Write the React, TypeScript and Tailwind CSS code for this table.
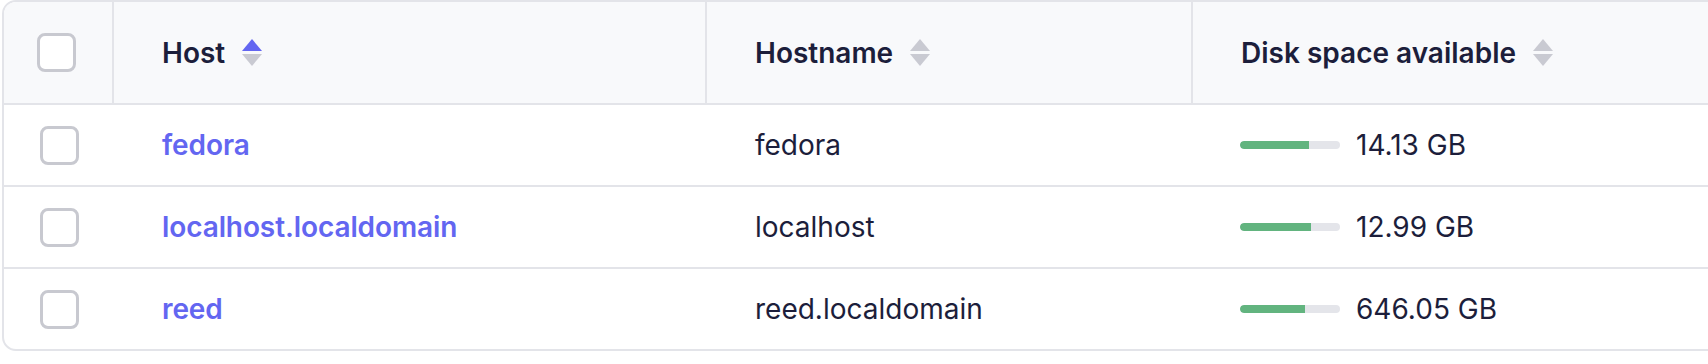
import React from "react";

type HostRow = {
  host: string;
  hostname: string;
  disk: string;
  used: number;
};

const rows: HostRow[] = [
  { host: "fedora", hostname: "fedora", disk: "14.13 GB", used: 69 },
  { host: "localhost.localdomain", hostname: "localhost", disk: "12.99 GB", used: 71 },
  { host: "reed", hostname: "reed.localdomain", disk: "646.05 GB", used: 65 },
];

const gridCols = "grid grid-cols-[110px_593px_486px_1fr]";

function SortIcon({ active }: { active?: boolean }) {
  return (
    <svg width="20" height="28" viewBox="0 0 20 28" className="ml-[17px] shrink-0">
      <path d="M10 0 L20 12 L0 12 Z" fill={active ? "#6366f1" : "#c9cad2"} />
      <path d="M0 15 L20 15 L10 27 Z" fill="#c9cad2" />
    </svg>
  );
}

function Checkbox() {
  return (
    <span className="block h-[39px] w-[39px] rounded-[8px] border-[3px] border-[#c8c9d0] bg-white" />
  );
}

function HeaderCell({ label, active, last }: { label: string; active?: boolean; last?: boolean }) {
  return (
    <div
      className={
        last
          ? "flex items-center pl-12"
          : "flex items-center border-r-2 border-[#e3e4e9] pl-12"
      }
    >
      <span className="font-semibold text-[#1c1e3b]">{label}</span>
      <SortIcon active={active} />
    </div>
  );
}

export default function App() {
  return (
    <div className="h-[364px] w-[1708px] overflow-hidden bg-white font-['Inter','Liberation_Sans',sans-serif] text-[28px] leading-none text-[#1c1e3b]">
      <div className="ml-[2px] w-[1800px] overflow-hidden rounded-l-[14px] border-2 border-[#e3e4e9]">
        <div className={`${gridCols} h-[103px] border-b-2 border-[#e3e4e9] bg-[#f8f9fb]`}>
          <div className="flex items-center justify-center border-r-2 border-[#e3e4e9] pr-[4px]">
            <Checkbox />
          </div>
          <HeaderCell label="Host" active />
          <HeaderCell label="Hostname" />
          <HeaderCell label="Disk space available" last />
        </div>
        {rows.map((row, i) => (
          <div
            key={row.host}
            className={
              i < rows.length - 1
                ? `${gridCols} h-[82px] border-b-2 border-[#e3e4e9]`
                : `${gridCols} h-[80px]`
            }
          >
            <div className="flex items-center justify-center">
              <Checkbox />
            </div>
            <div className="flex items-center pl-12">
              <span className="font-semibold tracking-[-0.1px] text-[#6366f1]">{row.host}</span>
            </div>
            <div className="flex items-center pl-12">{row.hostname}</div>
            <div className="flex items-center pl-[47px]">
              <div className="h-2 w-[100px] overflow-hidden rounded-full bg-[#e4e5ea]">
                <div className="h-full rounded-l-full bg-[#62b47f]" style={{ width: `${row.used}%` }} />
              </div>
              <span className="ml-4">{row.disk}</span>
            </div>
          </div>
        ))}
      </div>
    </div>
  );
}
